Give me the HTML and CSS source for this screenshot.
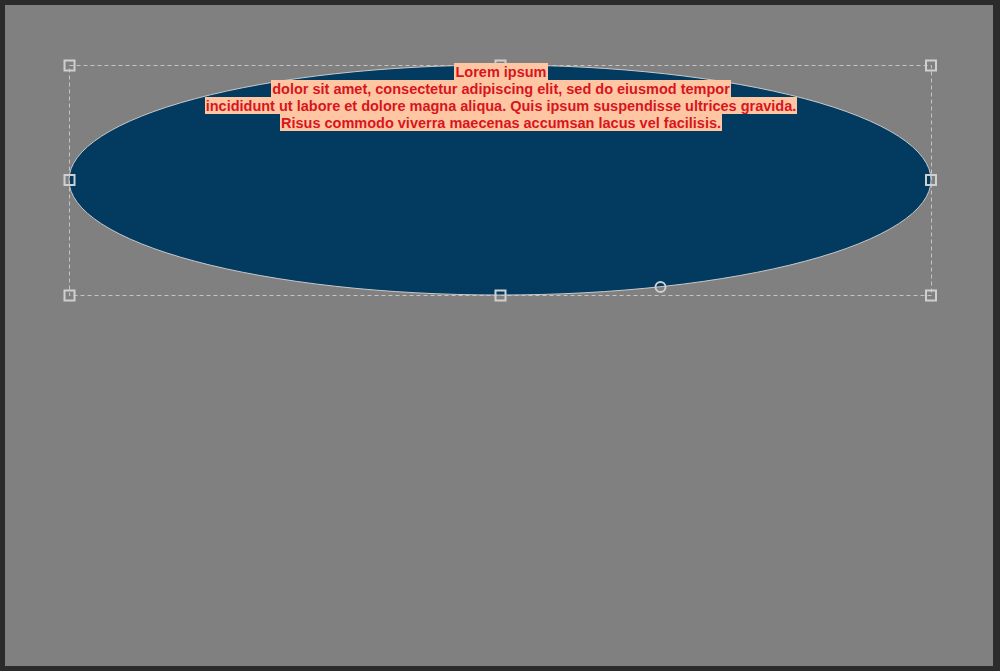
FILE: index.html
```html
<!DOCTYPE html>
<html>
<head>
<meta charset="utf-8">
<link rel="stylesheet" href="styles.css">
</head>
<body>
<div class="canvas">
  <svg class="shape" width="988" height="661" viewBox="5 5 988 661" xmlns="http://www.w3.org/2000/svg">
    <ellipse cx="500" cy="180" rx="431" ry="115" fill="#033a60" stroke="#c9c9c9" stroke-width="1"/>
    <rect x="69.5" y="65.5" width="862" height="230" fill="none" stroke="#c4c4c4" stroke-width="1" stroke-dasharray="4 3"/>
    <g fill="none" stroke="#cfcfcf" stroke-width="2">
      <rect x="64.5" y="60.5" width="10" height="10"/>
      <rect x="495.5" y="60.5" width="10" height="10"/>
      <rect x="926" y="60.5" width="10" height="10"/>
      <rect x="64.5" y="175" width="10" height="10"/>
      <rect x="926" y="175" width="10" height="10"/>
      <rect x="64.5" y="290.5" width="10" height="10"/>
      <rect x="495.5" y="290.5" width="10" height="10"/>
      <rect x="926" y="290.5" width="10" height="10"/>
      <circle cx="660.5" cy="287" r="5"/>
    </g>
  </svg>
  <div class="label">
    <div class="line"><span>Lorem ipsum</span></div>
    <div class="line"><span>dolor sit amet, consectetur adipiscing elit, sed do eiusmod tempor</span></div>
    <div class="line"><span>incididunt ut labore et dolore magna aliqua. Quis ipsum suspendisse ultrices gravida.</span></div>
    <div class="line"><span>Risus commodo viverra maecenas accumsan lacus vel facilisis.</span></div>
  </div>
</div>
</body>
</html>
```
FILE: styles.css
```css
html, body {
  margin: 0;
  padding: 0;
  background: #2b2b2b;
  width: 1000px;
  height: 671px;
  overflow: hidden;
}
.canvas {
  position: relative;
  margin: 5px 7px 0 5px;
  width: 988px;
  height: 661px;
  background: #808080;
}
.shape {
  position: absolute;
  left: 0;
  top: 0;
}
.label {
  position: absolute;
  left: 0;
  top: 58px;
  width: 992px;
  text-align: center;
  font-family: "Liberation Sans", Arial, sans-serif;
  font-weight: bold;
  font-size: 14.5px;
  line-height: 17px;
  color: #d8151c;
}
.line span {
  background: #ffc6a4;
  padding: 0.5px 1px;
}
```
